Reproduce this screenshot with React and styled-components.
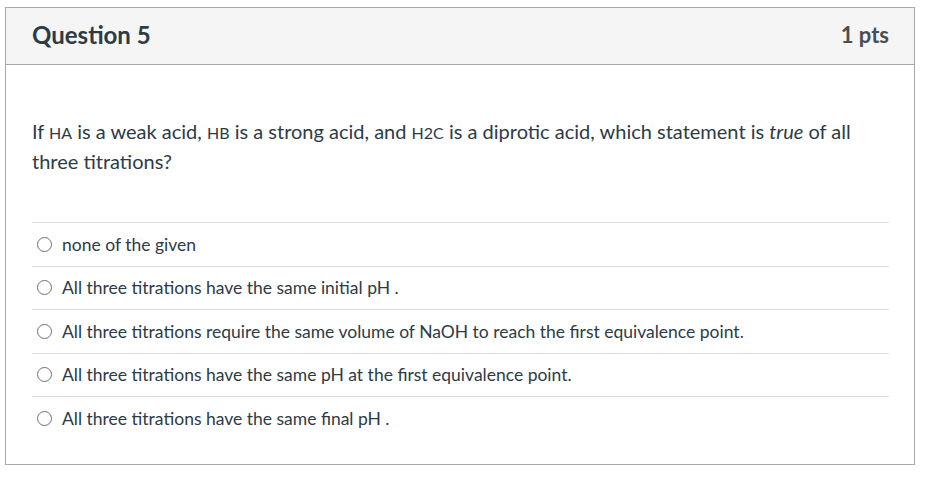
import React from "react";
import styled, { createGlobalStyle } from "styled-components";

const Global = createGlobalStyle`
  body {
    margin: 0;
    background: #fff;
    font-family: Lato, "Liberation Sans", sans-serif;
    color: #2d3b45;
  }
`;

const Card = styled.div`
  margin: 7px 0 0 5px;
  width: 910px;
  height: 458px;
  box-sizing: border-box;
  border: 1px solid #aaaaaa;
  display: flex;
  flex-direction: column;
`;

const Header = styled.div`
  height: 57px;
  box-sizing: border-box;
  background: #f5f5f5;
  border-bottom: 1px solid #aaaaaa;
  display: flex;
  align-items: center;
  justify-content: space-between;
  padding: 0 25px 4px 26px;
`;

const Title = styled.div`
  font-size: 24px;
  font-weight: 700;
  color: #2d3b45;
`;

const Points = styled.div`
  font-size: 22px;
  font-weight: 700;
  color: #464f55;
`;

const Body = styled.div`
  padding: 51px 25px 0 26px;
`;

const Prompt = styled.div`
  font-size: 20px;
  line-height: 30px;
  margin-bottom: 46px;
`;

const Formula = styled.span`
  font-size: 16px;
  line-height: 1;
`;

const Answers = styled.div`
  display: flex;
  flex-direction: column;
`;

const Answer = styled.label`
  display: flex;
  align-items: center;
  gap: 10px;
  height: 43.5px;
  box-sizing: border-box;
  border-top: 1px solid #dddddd;
  padding-left: 5px;
  font-size: 17.5px;
`;

const Radio = styled.span`
  width: 15px;
  height: 15px;
  box-sizing: border-box;
  border-radius: 50%;
  border: 1.5px solid #707070;
  flex-shrink: 0;
`;

const answers = [
  "none of the given",
  "All three titrations have the same initial pH .",
  "All three titrations require the same volume of NaOH to reach the first equivalence point.",
  "All three titrations have the same pH at the first equivalence point.",
  "All three titrations have the same final pH .",
];

export default function App() {
  return (
    <>
      <Global />
      <Card>
        <Header>
          <Title>Question 5</Title>
          <Points>1 pts</Points>
        </Header>
        <Body>
          <Prompt>
            If <Formula>HA</Formula> is a weak acid, <Formula>HB</Formula> is a
            strong acid, and <Formula>H2C</Formula> is a diprotic acid, which
            statement is <em>true</em> of all three titrations?
          </Prompt>
          <Answers>
            {answers.map((a) => (
              <Answer key={a}>
                <Radio />
                {a}
              </Answer>
            ))}
          </Answers>
        </Body>
      </Card>
    </>
  );
}
